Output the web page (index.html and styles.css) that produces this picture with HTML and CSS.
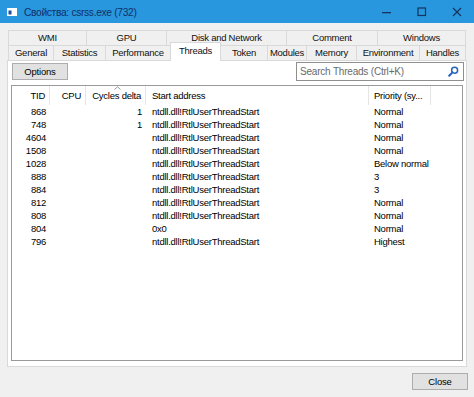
FILE: index.html
```html
<!DOCTYPE html>
<html>
<head>
<meta charset="utf-8">
<link rel="stylesheet" href="styles.css">
</head>
<body>
<div class="window">
  <div class="titlebar">
    <svg class="appicon" width="10" height="8" viewBox="0 0 10 8"><rect x="0" y="0" width="10" height="8" fill="#ffffff"/><rect x="1.5" y="2.5" width="3" height="4" fill="#1d4d9c"/></svg>
    <span class="title">Свойства: csrss.exe (732)</span>
    <div class="controls">
      <span class="ctl"><svg width="10" height="10" viewBox="0 0 10 10"><rect x="0" y="5" width="9" height="1.3" fill="#17325e"/></svg></span>
      <span class="ctl"><svg width="10" height="10" viewBox="0 0 10 10"><rect x="1" y="1" width="7.5" height="7.5" fill="none" stroke="#17325e" stroke-width="1.2"/></svg></span>
      <span class="ctl"><svg width="10" height="10" viewBox="0 0 10 10"><path d="M1 1 L9 9 M9 1 L1 9" stroke="#17325e" stroke-width="1.2"/></svg></span>
    </div>
  </div>

  <div class="tabs">
    <div class="tabrow r1">
      <div class="tab">WMI</div>
      <div class="tab">GPU</div>
      <div class="tab">Disk and Network</div>
      <div class="tab">Comment</div>
      <div class="tab">Windows</div>
    </div>
    <div class="tabrow r2">
      <div class="tab">General</div>
      <div class="tab">Statistics</div>
      <div class="tab">Performance</div>
      <div class="tab sel">Threads</div>
      <div class="tab">Token</div>
      <div class="tab">Modules</div>
      <div class="tab">Memory</div>
      <div class="tab">Environment</div>
      <div class="tab">Handles</div>
    </div>
  </div>

  <div class="page">
    <div class="toolbar">
      <button class="btn">Options</button>
      <div class="search">
        <span class="ph">Search Threads (Ctrl+K)</span>
        <svg class="mag" width="11" height="11" viewBox="0 0 11 11"><circle cx="6.6" cy="4.2" r="3" fill="none" stroke="#2463bd" stroke-width="1.5"/><path d="M4.5 6.4 L1.2 9.8" stroke="#2463bd" stroke-width="2" stroke-linecap="round"/></svg>
      </div>
    </div>
    <div class="list">
      <div class="lrow lhead">
        <div class="c r">TID</div>
        <div class="c r">CPU</div>
        <div class="c r sorted"><svg class="sortarrow" width="7" height="4" viewBox="0 0 7 4"><path d="M0.5 3.5 L3.5 0.8 L6.5 3.5" fill="none" stroke="#9a9a9a" stroke-width="1"/></svg>Cycles delta</div>
        <div class="c l">Start address</div>
        <div class="c l pri">Priority (sy...</div>
      </div>
      <div class="lrow"><div class="c r">868</div><div class="c r"></div><div class="c r">1</div><div class="c l">ntdll.dll!RtlUserThreadStart</div><div class="c l pri">Normal</div></div>
      <div class="lrow"><div class="c r">748</div><div class="c r"></div><div class="c r">1</div><div class="c l">ntdll.dll!RtlUserThreadStart</div><div class="c l pri">Normal</div></div>
      <div class="lrow"><div class="c r">4604</div><div class="c r"></div><div class="c r"></div><div class="c l">ntdll.dll!RtlUserThreadStart</div><div class="c l pri">Normal</div></div>
      <div class="lrow"><div class="c r">1508</div><div class="c r"></div><div class="c r"></div><div class="c l">ntdll.dll!RtlUserThreadStart</div><div class="c l pri">Normal</div></div>
      <div class="lrow"><div class="c r">1028</div><div class="c r"></div><div class="c r"></div><div class="c l">ntdll.dll!RtlUserThreadStart</div><div class="c l pri">Below normal</div></div>
      <div class="lrow"><div class="c r">888</div><div class="c r"></div><div class="c r"></div><div class="c l">ntdll.dll!RtlUserThreadStart</div><div class="c l pri">3</div></div>
      <div class="lrow"><div class="c r">884</div><div class="c r"></div><div class="c r"></div><div class="c l">ntdll.dll!RtlUserThreadStart</div><div class="c l pri">3</div></div>
      <div class="lrow"><div class="c r">812</div><div class="c r"></div><div class="c r"></div><div class="c l">ntdll.dll!RtlUserThreadStart</div><div class="c l pri">Normal</div></div>
      <div class="lrow"><div class="c r">808</div><div class="c r"></div><div class="c r"></div><div class="c l">ntdll.dll!RtlUserThreadStart</div><div class="c l pri">Normal</div></div>
      <div class="lrow"><div class="c r">804</div><div class="c r"></div><div class="c r"></div><div class="c l">0x0</div><div class="c l pri">Normal</div></div>
      <div class="lrow"><div class="c r">796</div><div class="c r"></div><div class="c r"></div><div class="c l">ntdll.dll!RtlUserThreadStart</div><div class="c l pri">Highest</div></div>
    </div>
  </div>

  <div class="footer">
    <button class="btn">Close</button>
  </div>
</div>
</body>
</html>
```

FILE: styles.css
```css
* { box-sizing: border-box; }
html, body { margin: 0; padding: 0; }
body {
  width: 474px;
  height: 397px;
  overflow: hidden;
  font-family: "Liberation Sans", Arial, sans-serif;
  font-size: 9.5px;
  letter-spacing: -0.25px;
  color: #000;
}
.window {
  width: 474px;
  height: 397px;
  background: #f0f0f0;
  display: flex;
  flex-direction: column;
}
.titlebar {
  height: 23px;
  flex: none;
  background: #2997de;
  display: flex;
  align-items: center;
  padding-left: 7px;
}
.appicon { flex: none; margin-top: 1px; }
.title {
  margin-left: 7px;
  font-size: 10.2px;
  letter-spacing: -0.3px;
  color: #10306a;
  margin-top: 1px;
}
.controls {
  margin-left: auto;
  display: flex;
  height: 23px;
}
.ctl {
  width: 35px;
  display: flex;
  align-items: center;
  justify-content: center;
}
.ctl svg { display: block; }

/* Tabs */
.tabs {
  margin-top: 7px;
  padding-left: 8px;
  width: 466px;
  flex: none;
}
.tabrow {
  display: flex;
  height: 15px;
  position: relative;
}
.tab {
  flex: none;
  height: 15px;
  border: 1px solid #d9d9d9;
  border-bottom: none;
  margin-left: -1px;
  background: #f0f0f0;
  text-align: center;
  line-height: 14px;
  color: #111;
  white-space: nowrap;
}
.tab:first-child { margin-left: 0; }
.r1 .tab:nth-child(1) { width: 79px; }
.r1 .tab:nth-child(2) { width: 81px; }
.r1 .tab:nth-child(3) { width: 121px; }
.r1 .tab:nth-child(4) { width: 92px; }
.r1 .tab:nth-child(5) { width: 89px; }
.r2 .tab:nth-child(1) { width: 46px; }
.r2 .tab:nth-child(2) { width: 53px; }
.r2 .tab:nth-child(3) { width: 66px; }
.r2 .tab:nth-child(4) { width: 51px; }
.r2 .tab:nth-child(5) { width: 48px; }
.r2 .tab:nth-child(6) { width: 40px; }
.r2 .tab:nth-child(7) { width: 51px; }
.r2 .tab:nth-child(8) { width: 64px; }
.r2 .tab:nth-child(9) { width: 47px; }
.tab.sel {
  height: 19px;
  margin-top: -3px;
  background: #ffffff;
  position: relative;
  z-index: 2;
  line-height: 16px;
}

/* Page */
.page {
  flex: none;
  height: 307px;
  margin: 0 7px;
  background: #ffffff;
  border: 1px solid #d9d9d9;
  display: flex;
  flex-direction: column;
  padding: 1px 2px 5px 3px;
}
.toolbar {
  display: flex;
  align-items: center;
  height: 19px;
  flex: none;
}
.btn {
  font-family: inherit;
  font-size: 9.5px;
  letter-spacing: -0.2px;
  color: #000;
  width: 56px;
  height: 17px;
  padding: 0;
  background: #e1e1e1;
  border: 1px solid #adadad;
  border-radius: 0;
  line-height: 15px;
}
.toolbar .btn { margin-left: 1px; }
.search {
  margin-left: auto;
  width: 168px;
  height: 19px;
  border: 1px solid #8f8f8f;
  background: #fff;
  display: flex;
  align-items: center;
  padding: 0 4px 0 3px;
}
.ph { color: #6a6a6a; font-size: 10px; letter-spacing: -0.2px; }
.mag { margin-left: auto; display: block; }

/* List */
.list {
  margin-top: 4px;
  flex: 1;
  border: 1px solid #9a9a9a;
  background: #fff;
  margin-right: 1px;
}
.lrow {
  display: grid;
  grid-template-columns: 38px 36px 60px 223px 62px;
  height: 13px;
  line-height: 13px;
  white-space: nowrap;
}
.lrow.lhead {
  height: 19px;
  line-height: 19px;
}
.lhead .c { border-right: 1px solid #e5e5e5; position: relative; }
.c { overflow: hidden; }
.c.pri { overflow: visible; }
.c.r { text-align: right; padding-right: 4px; }
.c.l { padding-left: 6px; }
.c.pri { padding-left: 5px; }
.sortarrow {
  position: absolute;
  left: 28px;
  top: 0;
}
.footer {
  flex: 1;
  display: flex;
  justify-content: flex-end;
  align-items: flex-start;
  padding: 6px 6px 0 0;
}
```
